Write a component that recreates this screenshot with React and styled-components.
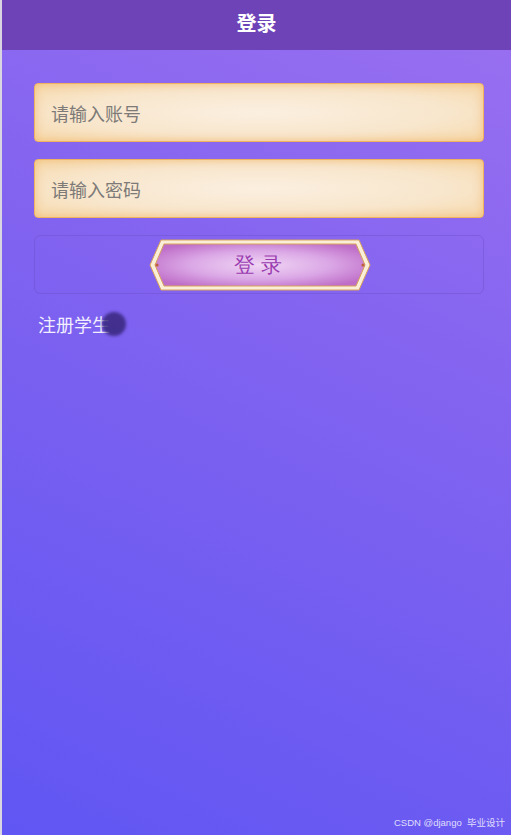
import React from 'react';
import styled, { createGlobalStyle } from 'styled-components';

const GlobalStyle = createGlobalStyle`
  html, body {
    margin: 0;
    padding: 0;
    height: 100%;
  }
  body {
    font-family: "Noto Sans CJK SC", "Noto Sans", sans-serif;
  }
  #root {
    height: 100%;
  }
`;

const Page = styled.div`
  position: relative;
  height: 835px;
  display: flex;
  flex-direction: column;
  border-left: 2px solid #d9d6e2;
  box-sizing: border-box;
  background: linear-gradient(205deg, #9a70f0 0%, #7f62f0 45%, #6056f3 100%);
  overflow: hidden;
`;

const Header = styled.header`
  height: 50px;
  flex-shrink: 0;
  display: flex;
  align-items: center;
  justify-content: center;
  background: #6d43b7;
  color: #fff;
  font-size: 20px;
  font-weight: 700;
  padding-bottom: 5px;
  box-sizing: border-box;
`;

const Form = styled.form`
  display: flex;
  flex-direction: column;
  gap: 17px;
  padding: 33px 27px 0 32px;
`;

const Input = styled.input`
  height: 59px;
  box-sizing: border-box;
  border: 1px solid #f0b25e;
  border-radius: 4px;
  padding: 0 16px;
  font-family: inherit;
  font-size: 18px;
  color: #555;
  outline: none;
  background: radial-gradient(ellipse at 50% 50%, #fbefe0 0%, #f8e6cc 60%, #f6d9aa 100%);
  box-shadow: inset 0 0 10px rgba(240, 170, 80, 0.55);

  &::placeholder {
    color: #7d7a77;
  }
`;

const ButtonRow = styled.div`
  height: 59px;
  box-sizing: border-box;
  border: 1px solid rgba(110, 80, 200, 0.45);
  border-radius: 6px;
  display: flex;
  align-items: center;
  justify-content: center;
`;

const HexButton = styled.button`
  position: relative;
  width: 224px;
  height: 54px;
  border: none;
  padding: 0;
  background: none;
  cursor: pointer;
  display: flex;
  align-items: center;
  justify-content: center;
  margin-left: 1px;

  svg {
    position: absolute;
    inset: 0;
  }

  span {
    position: relative;
    font-family: inherit;
    font-size: 21px;
    letter-spacing: 6px;
    margin-left: 2px;
    color: #9a3bb0;
  }
`;

const RegisterLink = styled.a`
  position: relative;
  align-self: flex-start;
  margin: 4px 0 0 4px;
  color: #f2efff;
  font-size: 18px;
  text-decoration: none;
  line-height: 1;

  &::after {
    content: '';
    position: absolute;
    left: 64px;
    top: -3px;
    width: 24px;
    height: 24px;
    border-radius: 50%;
    background: rgba(52, 36, 120, 0.82);
    filter: blur(1.5px);
  }
`;

const Watermark = styled.div`
  position: absolute;
  right: 6px;
  bottom: 6px;
  font-family: "Liberation Sans", "Noto Sans CJK SC", sans-serif;
  font-size: 9.5px;
  color: rgba(255, 255, 255, 0.8);
`;

const HexShape = () => (
  <svg width="224" height="54" viewBox="0 0 224 54">
    <defs>
      <radialGradient id="hexFill" cx="50%" cy="50%" r="60%">
        <stop offset="0%" stopColor="#f0d6f4" />
        <stop offset="55%" stopColor="#dba8e6" />
        <stop offset="100%" stopColor="#bf6ec8" />
      </radialGradient>
    </defs>
    <polygon
      points="13,2 211,2 222,27 211,52 13,52 2,27"
      fill="#fbeed8"
      stroke="#d9a35c"
      strokeWidth="1"
    />
    <polygon
      points="16,6 208,6 217,27 208,48 16,48 7,27"
      fill="url(#hexFill)"
      stroke="#d6a25a"
      strokeWidth="1"
    />
    <circle cx="9" cy="27" r="1.6" fill="#c0603c" />
    <circle cx="215" cy="27" r="1.6" fill="#c0603c" />
  </svg>
);

export default function App() {
  return (
    <>
      <GlobalStyle />
      <Page>
        <Header>登录</Header>
        <Form onSubmit={(e) => e.preventDefault()}>
          <Input type="text" placeholder="请输入账号" />
          <Input type="password" placeholder="请输入密码" />
          <ButtonRow>
            <HexButton type="submit">
              <HexShape />
              <span>登录</span>
            </HexButton>
          </ButtonRow>
          <RegisterLink href="#">注册学生</RegisterLink>
        </Form>
        <Watermark>CSDN @django&nbsp; 毕业设计</Watermark>
      </Page>
    </>
  );
}
